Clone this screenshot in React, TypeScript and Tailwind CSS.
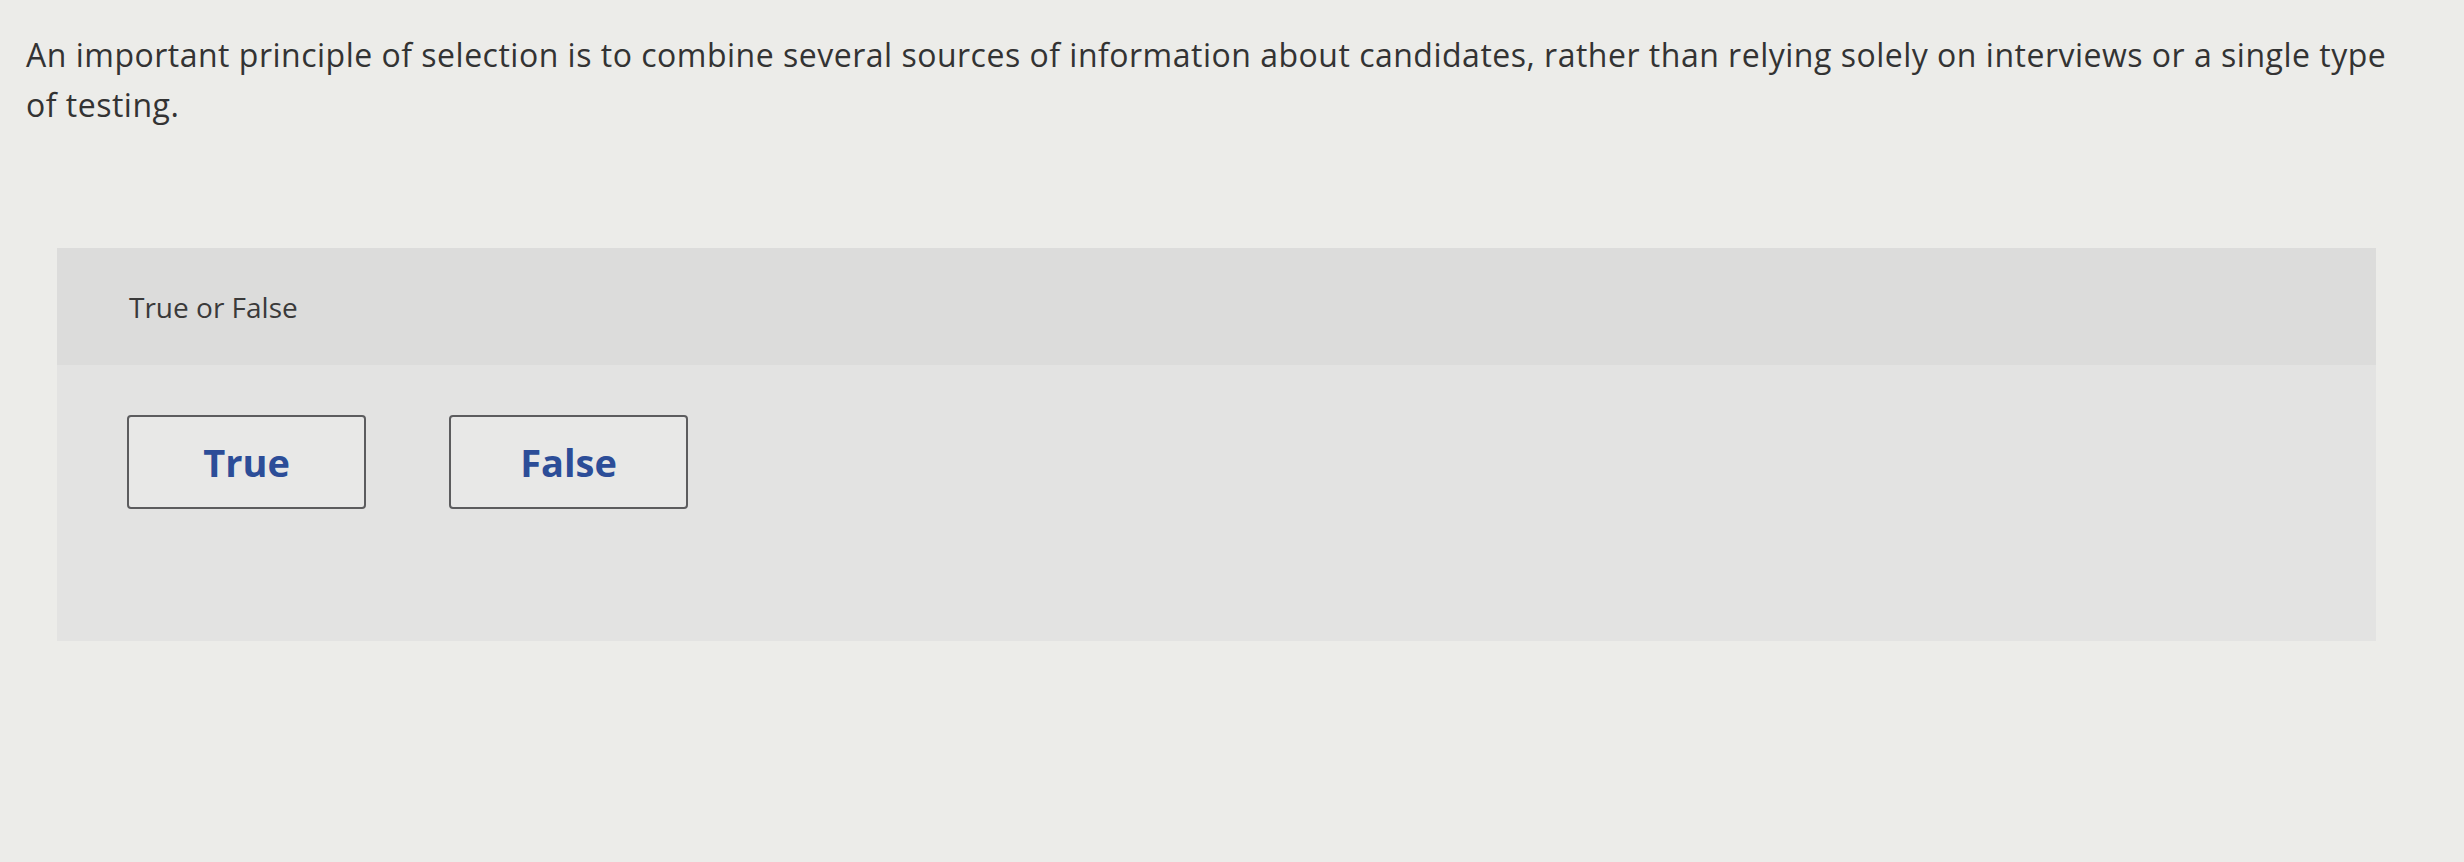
import React, { useState } from 'react';

const question =
  'An important principle of selection is to combine several sources of information about candidates, rather than relying solely on interviews or a single type of testing.';

export default function App() {
  const [answer, setAnswer] = useState<'true' | 'false' | null>(null);

  return (
    <div className="w-full h-[862px] bg-[#ecece9] font-['Open_Sans','Lato',sans-serif] overflow-hidden">
      <p className="pl-[26px] pr-[44px] pt-[30px] text-[32px] tracking-[0.5px] leading-[50px] text-[#333333]">
        {question}
      </p>

      <div className="ml-[57px] mr-[88px] mt-[118px] bg-[#e3e3e2]">
        <div className="h-[117px] bg-[#dcdcdb] flex items-center pl-[72px]">
          <span className="text-[28px] text-[#3a3a3a]">True or False</span>
        </div>
        <div className="flex gap-[83px] pl-[70px] pt-[50px] pb-[132px]">
          {(['true', 'false'] as const).map(opt => (
            <button
              key={opt}
              onClick={() => setAnswer(opt)}
              className={`w-[239px] h-[94px] rounded-[4px] border-2 border-[#5c5c5e] flex items-center justify-center text-[38px] font-bold text-[#2c4d98] ${
                answer === opt ? 'bg-[#dfe6f3]' : 'bg-[#e8e8e7]'
              }`}
            >
              {opt === 'true' ? 'True' : 'False'}
            </button>
          ))}
        </div>
      </div>
    </div>
  );
}
